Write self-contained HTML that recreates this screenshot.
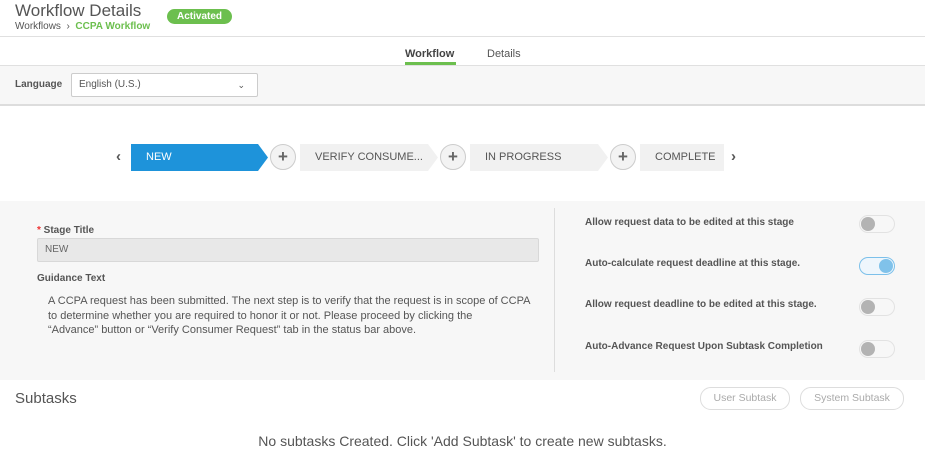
<!DOCTYPE html><html><head><style>
body{margin:0;width:925px;height:464px;position:relative;font-family:"Liberation Sans",sans-serif;background:#fff;overflow:hidden;color:#555}
.a{position:absolute;white-space:nowrap}
.tg{position:absolute;width:34px;height:16px;border:1px solid #e2e2e2;border-radius:9px;background:#f7f7f7}
.tg i{position:absolute;left:1px;top:1px;width:14px;height:14px;border-radius:50%;background:#b3b3b3}
.lbl{font-size:10px;font-weight:bold;color:#555}
.plus{position:absolute;width:24px;height:24px;border:1px solid #ccc;border-radius:50%;background:#f3f3f3;top:144px;text-align:center;line-height:23px;font-size:17px;font-weight:bold;color:#666}
.step{position:absolute;top:144px;height:27px;line-height:27px;font-size:11px;color:#555}
</style></head><body>
<div class="a" style="left:15px;top:1px;font-size:17px;color:#555">Workflow Details</div>
<div class="a" style="left:15px;top:21px;font-size:10px;color:#555">Workflows &nbsp;›&nbsp; <b style="color:#6cbf4e">CCPA Workflow</b></div>
<div class="a" style="left:167px;top:9px;width:65px;height:15px;background:#6cbf4e;border-radius:8px;color:#fff;font-size:10px;font-weight:bold;text-align:center;line-height:15px">Activated</div>
<div class="a" style="left:0;top:36px;width:925px;height:1px;background:#e0e0e0"></div>
<div class="a" style="left:405px;top:48px;font-size:11px;font-weight:bold;color:#444">Workflow</div>
<div class="a" style="left:405px;top:62px;width:51px;height:3px;background:#6cbf4e"></div>
<div class="a" style="left:487px;top:48px;font-size:11px;color:#555">Details</div>
<div class="a" style="left:0;top:65px;width:925px;height:38px;background:#f7f7f7;border-top:1px solid #e0e0e0;border-bottom:2px solid #ddd"></div>
<div class="a" style="left:15px;top:79px;font-size:10px;font-weight:bold;color:#555">Language</div>
<div class="a" style="left:71px;top:73px;width:185px;height:22px;background:#fff;border:1px solid #ccc;border-radius:2px;font-size:10px;line-height:22px;text-indent:7px;color:#555">English (U.S.)<span style="position:absolute;right:12px;top:0;font-size:9px">⌄</span></div>
<div class="a" style="left:116px;top:148px;font-size:15px;font-weight:bold;color:#555">‹</div>
<svg class="a" style="left:131px;top:144px" width="138" height="27"><polygon points="0,0 127,0 137,13.5 127,27 0,27" fill="#1e93da"/></svg>
<div class="step" style="left:146px;color:#fff">NEW</div>
<div class="plus" style="left:270px">+</div>
<svg class="a" style="left:300px;top:144px" width="140" height="27"><polygon points="0,0 128,0 138,13.5 128,27 0,27" fill="#f1f1f1"/></svg>
<div class="step" style="left:315px">VERIFY CONSUME...</div>
<div class="plus" style="left:440px">+</div>
<svg class="a" style="left:470px;top:144px" width="140" height="27"><polygon points="0,0 128,0 138,13.5 128,27 0,27" fill="#f1f1f1"/></svg>
<div class="step" style="left:485px">IN PROGRESS</div>
<div class="plus" style="left:610px">+</div>
<div class="a" style="left:640px;top:144px;width:84px;height:27px;background:#f1f1f1"></div>
<div class="step" style="left:655px">COMPLETE</div>
<div class="a" style="left:731px;top:148px;font-size:15px;font-weight:bold;color:#555">›</div>
<div class="a" style="left:0;top:201px;width:925px;height:179px;background:#f7f7f7"></div>
<div class="a" style="left:554px;top:208px;width:1px;height:164px;background:#ddd"></div>
<div class="a lbl" style="left:37px;top:225px"><span style="color:#e33">*</span> Stage Title</div>
<div class="a" style="left:37px;top:238px;width:500px;height:22px;background:#e8e8e8;border:1px solid #d8d8d8;border-radius:2px;font-size:10px;line-height:22px;text-indent:7px;color:#666">NEW</div>
<div class="a lbl" style="left:37px;top:273px">Guidance Text</div>
<div class="a" style="left:48px;top:294px;font-size:11px;line-height:14.5px;color:#555">A CCPA request has been submitted. The next step is to verify that the request is in scope of CCPA<br>to determine whether you are required to honor it or not. Please proceed by clicking the<br>“Advance” button or “Verify Consumer Request” tab in the status bar above.</div>
<div class="a lbl" style="left:585px;top:217px">Allow request data to be edited at this stage</div>
<div class="a lbl" style="left:585px;top:258px">Auto-calculate request deadline at this stage.</div>
<div class="a lbl" style="left:585px;top:299px">Allow request deadline to be edited at this stage.</div>
<div class="a lbl" style="left:585px;top:341px">Auto-Advance Request Upon Subtask Completion</div>
<div class="tg" style="left:859px;top:215px"><i></i></div>
<div class="tg" style="left:859px;top:257px;background:#eef6fc;border-color:#7cc0ea"><i style="left:19px;background:#80c2ea"></i></div>
<div class="tg" style="left:859px;top:298px"><i></i></div>
<div class="tg" style="left:859px;top:340px"><i></i></div>
<div class="a" style="left:15px;top:390px;font-size:15px;color:#555">Subtasks</div>
<div class="a" style="left:700px;top:387px;width:88px;height:21px;border:1px solid #ddd;border-radius:11px;font-size:10.5px;color:#aaa;text-align:center;line-height:21px">User Subtask</div>
<div class="a" style="left:800px;top:387px;width:102px;height:21px;border:1px solid #ddd;border-radius:11px;font-size:10.5px;color:#aaa;text-align:center;line-height:21px">System Subtask</div>
<div class="a" style="left:0;width:925px;top:433px;text-align:center;font-size:14px;color:#555">No subtasks Created. Click 'Add Subtask' to create new subtasks.</div>
</body></html>
